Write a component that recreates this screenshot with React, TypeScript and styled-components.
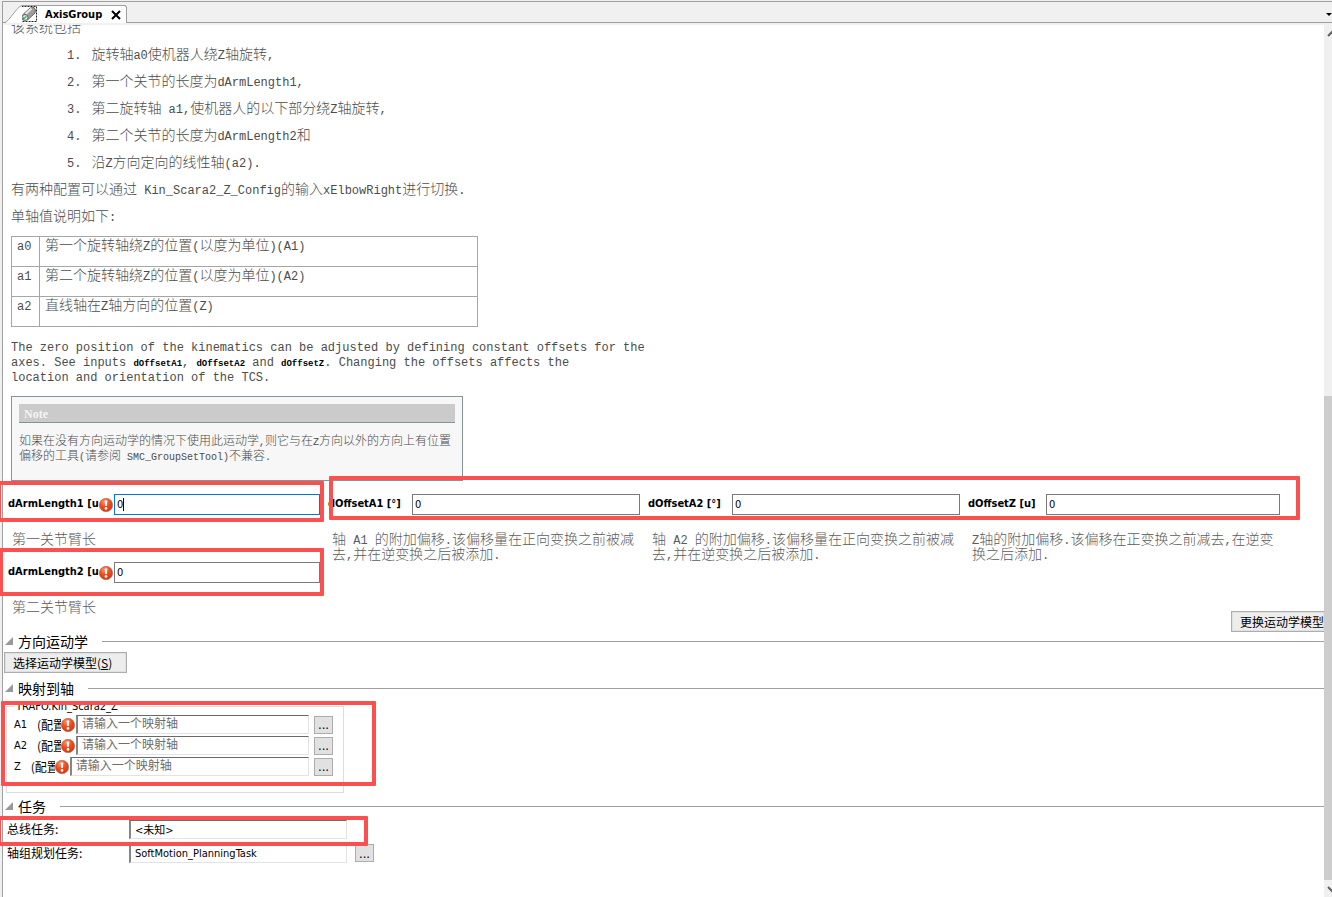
import React from "react";
import styled, { createGlobalStyle } from "styled-components";

const uiFont = `"DejaVu Sans Condensed", "Noto Sans", "Noto Sans CJK SC", sans-serif`;
const cjkFont = `"Noto Sans CJK SC", sans-serif`;
const docFont = `"Liberation Mono", "Noto Sans CJK SC", monospace`;

const GlobalStyle = createGlobalStyle`
  *, *::before, *::after { box-sizing: border-box; }
  body { margin: 0; background: #f0f0f0; color: #000; font: 11px/14px ${uiFont}; }
  p, ol, dl, h2 { margin: 0; padding: 0; }
  input, button { font: inherit; color: inherit; border-radius: 0; }
`;

const Page = styled.div`
  display: flex;
  flex-direction: column;
  height: 100vh;
  padding: 1px 0 0 2px;
  overflow: hidden;
`;

const TabStrip = styled.header`
  position: relative;
  display: flex;
  flex: none;
  align-items: flex-end;
  height: 22px;
  border: 1px solid #a0a0a0;
  border-right: 0;
`;

const Tab = styled.div`
  position: relative;
  display: flex;
  align-items: center;
  gap: 8px;
  height: 18px;
  margin: 0 0 -1px 19px;
  padding-right: 4px;
  background: #fff;
  border-top: 1px solid #a0a0a0;
  border-right: 1px solid #a0a0a0;
  border-top-right-radius: 3px;
  font-weight: 700;
`;

const TabSlope = styled.svg`
  position: absolute;
  right: 100%;
  top: -1px;
`;

const TabIcon = styled.svg`
  flex: none;
  margin-left: -2px;
`;

const CloseButton = styled.button`
  display: flex;
  padding: 1px;
  border: 0;
  background: none;
`;

const TabListButton = styled.button`
  display: flex;
  align-self: center;
  width: 6px;
  margin-left: auto;
  padding: 5px 0 0;
  overflow: hidden;
  border: 0;
  background: none;
`;

const Body = styled.div`
  display: flex;
  flex: 1;
  min-height: 0;
  padding-top: 2px;
  border-left: 1px solid #a0a0a0;
`;

const Viewport = styled.main`
  flex: 1;
  min-width: 0;
  margin-left: -3px;
  padding-left: 3px;
  overflow: hidden;
  background: #fff content-box;
`;

const ScrollTrack = styled.div`
  display: flex;
  flex: none;
  flex-direction: column;
  align-items: flex-end;
  justify-content: space-between;
  width: 8px;
  padding: 4px 0;
  overflow: hidden;
`;

const ScrollThumb = styled.div`
  flex: none;
  width: 8px;
  height: 54vh;
  margin: auto 0 5px;
  background: #cdcdcd;
`;

const Doc = styled.article`
  display: flex;
  flex-direction: column;
  align-items: flex-start;
  gap: 12px;
  margin-top: -6px;
  padding-left: 8px;
  color: #4c4c4c;
  font: 300 14px/15px ${cjkFont};
`;

const Half = styled.span<{ $small?: boolean }>`
  font: ${(p) => (p.$small ? 10 : 12)}px/8px ${docFont};
`;

const Steps = styled.ol`
  display: flex;
  flex-direction: column;
  gap: 12px;
  padding-left: 56px;
  list-style: none;
`;

const Step = styled.li`
  display: flex;
  align-items: baseline;
  gap: 10px;
  height: 15px;
`;

const AxisTable = styled.table`
  width: 467px;
  margin-top: 1px;
  border-collapse: collapse;

  td {
    height: 30px;
    padding: 0 5px;
    vertical-align: top;
    border: 1px solid #a6a6a6;
  }
  td:first-child { width: 28px; }
`;

const English = styled.p`
  padding-top: 2px;
  font: 12px/15px ${docFont};
  white-space: nowrap;

  code {
    color: #000;
    font: 700 9px/8px ${docFont};
  }
`;

const Note = styled.aside`
  width: 452px;
  height: 85px;
  margin-top: -2px;
  padding: 7px;
  background: #f7f7f7;
  border: 1px solid #82969a;
`;

const NoteTitle = styled.h2`
  height: 19px;
  padding: 0 5px;
  color: #f4f4f4;
  background: #cbcbcb;
  border-bottom: 1px solid #82969a;
  font: 700 12px/20px "Liberation Serif", serif;
`;

const NoteText = styled.p`
  padding: 9px 0 0;
  font-size: 12px;
  line-height: 15px;
  white-space: nowrap;
`;

const Params = styled.section`
  position: relative;
  display: grid;
  grid-template-columns: repeat(4, 1fr);
  column-gap: 8px;
  padding: 0 44px 0 5px;
`;

const Param = styled.div<{ $row: number; $col: number }>`
  position: relative;
  grid-row: ${(p) => p.$row};
  grid-column: ${(p) => p.$col};
  height: 68px;
  padding-top: 13px;
`;

const ParamLine = styled.div`
  position: relative;
  display: flex;
  align-items: center;
`;

const ParamLabel = styled.label<{ $width: number }>`
  flex: none;
  width: ${(p) => p.$width}px;
  padding-bottom: 2px;
  overflow: hidden;
  font-weight: 700;
  white-space: nowrap;
`;

const ParamInput = styled.input<{ $active?: boolean }>`
  flex: 1;
  min-width: 0;
  height: 21px;
  padding: 0 2px;
  background: #fff;
  border: 1px solid ${(p) => (p.$active ? "#0078d7" : "#7a7a7a")};
  outline: 0;
`;

const Caret = styled.span`
  position: absolute;
  top: 4px;
  left: 115px;
  width: 1px;
  height: 13px;
  background: #000;
`;

const ParamHelp = styled.p`
  padding: 16px 0 0 4px;
  color: #5c5c5c;
  font: 300 14px/15px ${cjkFont};
  white-space: nowrap;
`;

const ErrorSvg = styled.svg`
  flex: none;
  margin-right: 1px;
`;

const Mark = styled.div<{ $top: number; $left: number; $right: number; $height: number }>`
  position: absolute;
  z-index: 2;
  top: ${(p) => p.$top}px;
  left: ${(p) => p.$left}px;
  right: ${(p) => p.$right}px;
  height: ${(p) => p.$height}px;
  border: 4px solid #fb5050;
  border-radius: 1px;
  pointer-events: none;
`;

const OffsetArea = styled.div`
  position: relative;
  grid-row: 1;
  grid-column: 2 / 5;
  pointer-events: none;
`;

const PushButton = styled.button<{ $clipped?: boolean }>`
  height: 21px;
  padding: 0 ${(p) => (p.$clipped ? 0 : 14)}px 0 8px;
  overflow: hidden;
  color: #000;
  background: #ededed;
  border: 1px solid #adadad;
  border-right-width: ${(p) => (p.$clipped ? 0 : 1)}px;
  box-shadow: inset 0 0 0 1px #e0e0e0;
  font: 12px/17px ${cjkFont};
  white-space: nowrap;
`;

const ChangeRow = styled.div`
  display: flex;
  justify-content: flex-end;
  height: 20px;
  margin-top: -6px;
`;

const SectionHead = styled.h2`
  display: flex;
  align-items: center;
  height: 20px;
  padding-left: 2px;
  font: 14px/20px ${cjkFont};

  &::after {
    content: "";
    flex: 1;
    height: 1px;
    margin-left: 14px;
    background: #a0a0a0;
  }
  svg { flex: none; margin-right: 5px; }
`;

const Kinematics = styled.section`
  padding-bottom: 5px;

  ${PushButton} { margin: 1px 0 0 1px; }
`;

const Mapping = styled.section`
  position: relative;
  width: 373px;
  padding: 1px 0 3px 3px;
`;

const AxisGroupBox = styled.fieldset`
  width: 338px;
  height: 94px;
  margin: 0;
  padding: 1px 10px 0 7px;
  border: 1px solid #dcdcdc;

  legend {
    height: 14px;
    padding: 0 2px;
    line-height: 16px;
  }
`;

const AxisRow = styled.div`
  display: flex;
  align-items: center;
  height: 21px;
`;

const AxisLabel = styled.label`
  flex: none;
  white-space: pre;
`;

const Config = styled.span`
  display: inline-block;
  width: 24px;
  margin-left: 10px;
  overflow: hidden;
  vertical-align: middle;
  font: 12px/18px ${cjkFont};
`;

const SunkenInput = styled.input`
  flex: 1;
  min-width: 0;
  height: 19px;
  padding: 0 4px;
  background: #fff;
  border: 1px solid #e3e3e3;
  border-top: 1px solid #696969;
  border-left: 2px solid #868686;
  outline: 0;

  &::placeholder { color: #6d6d6d; opacity: 1; font: 12px/19px ${cjkFont}; }
`;

const MoreButton = styled.button`
  flex: none;
  width: 19px;
  height: 18px;
  padding: 0;
  margin-left: 5px;
  background: #e1e1e1;
  border: 1px solid #adadad;
  font-size: 13px;
  line-height: 15px;
`;

const Tasks = styled.section`
  position: relative;
  display: flex;
  flex-direction: column;
  gap: 4px;
  width: 371px;
  padding: 3px 0 0 4px;
`;

const TaskRow = styled.div`
  display: flex;
  align-items: center;
  height: 20px;

  label { flex: none; width: 122px; font: 12px/18px ${cjkFont}; }
  ${SunkenInput} { flex: none; width: 218px; }
  ${MoreButton} { margin-left: 8px; }
`;

/* Sets Latin runs in the half-width face and leaves Han text in the full-width one. */
function Mixed({ text, small }: { text: string; small?: boolean }) {
  return (
    <>
      {text.split(/([\x20-\x7e]+)/).map((run, i) =>
        i % 2 ? <Half key={i} $small={small}>{run}</Half> : run
      )}
    </>
  );
}

function ErrorIcon() {
  return (
    <ErrorSvg width="14" height="14" viewBox="0 0 14 14" aria-label="error">
      <defs>
        <radialGradient id="err" cx="0.4" cy="0.25" r="0.8">
          <stop offset="0" stopColor="#ff9468" />
          <stop offset="0.5" stopColor="#f04a1c" />
          <stop offset="1" stopColor="#cc3a12" />
        </radialGradient>
      </defs>
      <circle cx="7" cy="7" r="6.7" fill="url(#err)" stroke="#a8695a" strokeWidth="0.6" />
      <path d="M5.7 2.6h2.6l-.5 5.400h-1.600z" fill="#fff" />
      <circle cx="7" cy="10.400" r="1.300" fill="#fff" />
    </ErrorSvg>
  );
}

function Heading({ children }: { children: string }) {
  return (
    <SectionHead>
      <svg width="8" height="8" viewBox="0 0 8 8"><path d="M8 0v8H0z" fill="#999" /></svg>
      {children}
    </SectionHead>
  );
}

const steps = [
  "旋转轴a0使机器人绕Z轴旋转,",
  "第一个关节的长度为dArmLength1,",
  "第二旋转轴 a1,使机器人的以下部分绕Z轴旋转,",
  "第二个关节的长度为dArmLength2和",
  "沿Z方向定向的线性轴(a2).",
];

const axisValues = [
  ["a0", "第一个旋转轴绕Z的位置(以度为单位)(A1)"],
  ["a1", "第二个旋转轴绕Z的位置(以度为单位)(A2)"],
  ["a2", "直线轴在Z轴方向的位置(Z)"],
];

const params = [
  { id: "arm1", row: 1, col: 1, label: "dArmLength1 [u", width: 91, error: true, active: true, help: ["第一关节臂长"] },
  { id: "arm2", row: 2, col: 1, label: "dArmLength2 [u", width: 91, error: true, help: ["第二关节臂长"] },
  { id: "off1", row: 1, col: 2, label: "dOffsetA1 [°]", width: 84, help: ["轴 A1 的附加偏移.该偏移量在正向变换之前被减", "去,并在逆变换之后被添加."] },
  { id: "off2", row: 1, col: 3, label: "dOffsetA2 [°]", width: 84, help: ["轴 A2 的附加偏移.该偏移量在正向变换之前被减", "去,并在逆变换之后被添加."] },
  { id: "offz", row: 1, col: 4, label: "dOffsetZ [u]", width: 78, help: ["Z轴的附加偏移.该偏移在正变换之前减去,在逆变", "换之后添加."] },
];

export default function App() {
  return (
    <Page>
      <GlobalStyle />
      <TabStrip>
        <Tab>
          <TabSlope width="17" height="18" viewBox="0 0 17 18">
            <path d="M0 18C4 17 12 1.500 17 0.500V18z" fill="#fff" />
            <path d="M0 17.500C4 16.500 12 1.500 17 0.500" fill="none" stroke="#a0a0a0" />
          </TabSlope>
          <TabIcon width="17" height="17" viewBox="0 0 17 17">
            <rect x="1.500" y="0.500" width="15" height="15" fill="none" stroke="#222" strokeDasharray="2 1" />
            <path d="M2.500 9L10 2l4-.5 1.500 2.500-.5 3L7.500 14z" fill="#9c9f9c" stroke="#666" />
            <path d="M5.500 8l6-5.500" stroke="#e8eae8" strokeWidth="2" />
            <circle cx="5" cy="11.500" r="3" fill="#dfe8e2" stroke="#666" />
            <path d="M3 14l3.500-4" stroke="#39c54a" strokeWidth="1.200" />
            <path d="M2.500 14l1.500-3" stroke="#3a6fe0" />
          </TabIcon>
          AxisGroup
          <CloseButton aria-label="Close">
            <svg width="10" height="10" viewBox="0 0 10 10"><path d="M1 1l8 8M9 1L1 9" stroke="#000" strokeWidth="2" /></svg>
          </CloseButton>
        </Tab>
        <TabListButton aria-label="Open tabs">
          <svg width="10" height="5" viewBox="0 0 10 5"><path d="M0 0h10L5 5z" /></svg>
        </TabListButton>
      </TabStrip>
      <Body>
        <Viewport>
          <Doc>
            <p>该系统包括</p>
            <Steps>
              {steps.map((s, i) => (
                <Step key={s}><Half>{i + 1}.</Half><span><Mixed text={s} /></span></Step>
              ))}
            </Steps>
            <p><Mixed text="有两种配置可以通过 Kin_Scara2_Z_Config的输入xElbowRight进行切换." /></p>
            <p>单轴值说明如下<Half>:</Half></p>
            <AxisTable>
              <tbody>
                {axisValues.map(([name, text]) => (
                  <tr key={name}><td><Half>{name}</Half></td><td><Mixed text={text} /></td></tr>
                ))}
              </tbody>
            </AxisTable>
            <English>
              The zero position of the kinematics can be adjusted by defining constant offsets for the<br />
              axes. See inputs <code>dOffsetA1</code>, <code>dOffsetA2</code> and <code>dOffsetZ</code>. Changing the offsets affects the<br />
              location and orientation of the TCS.
            </English>
            <Note>
              <NoteTitle>Note</NoteTitle>
              <NoteText>
                <Mixed small text="如果在没有方向运动学的情况下使用此运动学,则它与在Z方向以外的方向上有位置" /><br />
                <Mixed small text="偏移的工具(请参阅 SMC_GroupSetTool)不兼容." />
              </NoteText>
            </Note>
          </Doc>

          <Params>
            {params.map((p) => (
              <Param key={p.id} $row={p.row} $col={p.col}>
                <ParamLine>
                  <ParamLabel htmlFor={p.id} $width={p.width}>{p.label}</ParamLabel>
                  {p.error && <ErrorIcon />}
                  <ParamInput id={p.id} defaultValue="0" $active={p.active} />
                  {p.active && <Caret />}
                </ParamLine>
                <ParamHelp>
                  {p.help.map((line, i) => (
                    <React.Fragment key={line}>{i > 0 && <br />}<Mixed text={line} /></React.Fragment>
                  ))}
                </ParamHelp>
                {p.col === 1 && (
                  <Mark $top={p.row === 1 ? 0 : -1} $left={p.row === 1 ? -11 : -9} $right={-4} $height={p.row === 1 ? 41 : 48} />
                )}
              </Param>
            ))}
            <OffsetArea><Mark $top={-5} $left={1} $right={-20} $height={44} /></OffsetArea>
          </Params>

          <ChangeRow><PushButton $clipped>更换运动学模型</PushButton></ChangeRow>

          <Kinematics>
            <Heading>方向运动学</Heading>
            <PushButton>选择运动学模型(<u>S</u>)</PushButton>
          </Kinematics>

          <Heading>映射到轴</Heading>
          <Mapping>
            <AxisGroupBox>
              <legend>TRAFO.Kin_Scara2_Z</legend>
              {["A1", "A2", "Z"].map((axis) => (
                <AxisRow key={axis}>
                  <AxisLabel htmlFor={`map-${axis}`}>{axis}<Config>(配置</Config></AxisLabel>
                  <ErrorIcon />
                  <SunkenInput id={`map-${axis}`} placeholder="请输入一个映射轴" />
                  <MoreButton aria-label={`Browse ${axis}`}>...</MoreButton>
                </AxisRow>
              ))}
            </AxisGroupBox>
            <Mark $top={3} $left={-2} $right={0} $height={85} />
          </Mapping>

          <Heading>任务</Heading>
          <Tasks>
            <TaskRow>
              <label htmlFor="bus">总线任务:</label>
              <SunkenInput id="bus" defaultValue="<未知>" />
            </TaskRow>
            <TaskRow>
              <label htmlFor="plan">轴组规划任务:</label>
              <SunkenInput id="plan" defaultValue="SoftMotion_PlanningTask" />
              <MoreButton aria-label="Browse tasks">...</MoreButton>
            </TaskRow>
            <Mark $top={0} $left={-6} $right={6} $height={30} />
          </Tasks>
        </Viewport>
        <ScrollTrack>
          <svg width="8" height="8" viewBox="0 0 8 8"><path d="M4 7l5-5" stroke="#606060" strokeWidth="2" /></svg>
          <ScrollThumb />
          <svg width="8" height="8" viewBox="0 0 8 8"><path d="M4 2l5 5" stroke="#606060" strokeWidth="2" /></svg>
        </ScrollTrack>
      </Body>
    </Page>
  );
}
